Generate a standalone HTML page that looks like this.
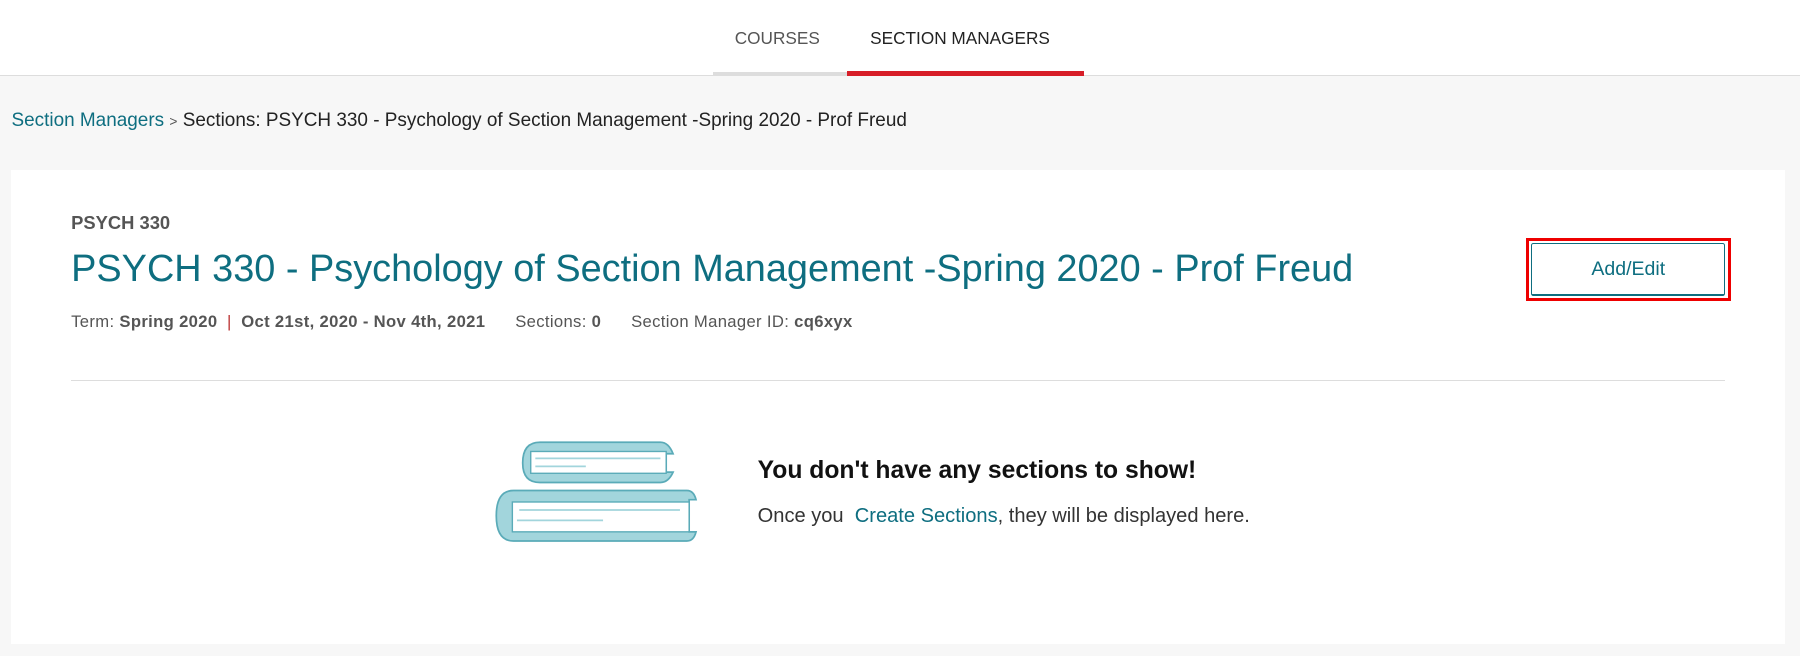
<!DOCTYPE html>
<html><head><meta charset="utf-8"><style>
html,body{margin:0;padding:0;}
body{width:1568px;height:571px;zoom:1.148;background:#f7f7f7;font-family:"Liberation Sans",sans-serif;position:relative;overflow:hidden;color:#333}
.hdr{position:absolute;left:0;top:0;width:1568px;height:65px;background:#fff;border-bottom:1px solid #ddd}
.tab{position:absolute;top:24px;font-size:15px;letter-spacing:0}
.card{position:absolute;left:10px;top:148px;width:1545px;height:413px;background:#fff}
</style></head><body>
<div class="hdr">
<div class="tab" style="left:640px;color:#555">COURSES</div>
<div class="tab" style="left:758px;color:#222">SECTION MANAGERS</div>
<div style="position:absolute;left:621px;top:63px;width:117px;height:2px;background:#ddd"></div>
<div style="position:absolute;left:738px;top:62px;width:206px;height:4px;background:#d71e28"></div>
</div>
<div style="position:absolute;left:10px;top:96px;font-size:16.5px;letter-spacing:0;white-space:nowrap"><span style="color:#0e6e80">Section Managers</span> <span style="font-size:12px;color:#555">&gt;</span> <span style="color:#222">Sections: PSYCH 330 - Psychology of Section Management -Spring 2020 - Prof Freud</span></div>
<div class="card">
<div style="position:absolute;left:52px;top:37px;font-size:16px;font-weight:bold;color:#555">PSYCH 330</div>
<div style="position:absolute;left:52px;top:68px;font-size:33px;color:#0e6e80;letter-spacing:0;white-space:nowrap">PSYCH 330 - Psychology of Section Management -Spring 2020 - Prof Freud</div>
<div style="position:absolute;left:52px;top:124px;font-size:14.5px;color:#555;white-space:nowrap;letter-spacing:0.3px">Term: <b>Spring 2020</b> <span style="color:#b33;margin:0 4px">|</span> <b>Oct 21st, 2020 - Nov 4th, 2021</b><span style="margin-left:26px">Sections: <b>0</b></span><span style="margin-left:26px">Section Manager ID: <b>cq6xyx</b></span></div>
<div style="position:absolute;left:1319px;top:59px;width:174px;height:50px;border:3px solid #e00"></div>
<div style="position:absolute;left:1324px;top:64px;width:167px;height:43px;border:1px solid #0e6e80;border-bottom-width:2px;border-radius:2px;color:#0e6e80;font-size:17px;text-align:center;line-height:44px">Add/Edit</div>
<div style="position:absolute;left:52px;top:183px;width:1441px;height:1px;background:#ddd"></div>
<svg style="position:absolute;left:420px;top:235px" width="180" height="90" viewBox="0 0 180 90">
<path d="M40 2 H145 Q152 2 156 12 H150 V28 H156 Q152 37 145 37 H40 Q25 37 25 20 Q25 2 40 2Z" fill="#a2d5dc" stroke="#5aabb8" stroke-width="1.5"/>
<rect x="32" y="10" width="118" height="19" fill="#fff" stroke="#5aabb8" stroke-width="1.2"/>
<line x1="36" y1="16" x2="145" y2="16" stroke="#a2d5dc" stroke-width="1.5"/><line x1="36" y1="23" x2="80" y2="23" stroke="#a2d5dc" stroke-width="1.5"/>
<path d="M17 44 H168 Q174 44 176 52 H170 V80 H176 Q174 88 168 88 H17 Q2 88 2 66 Q2 44 17 44Z" fill="#a2d5dc" stroke="#5aabb8" stroke-width="1.5"/>
<rect x="16" y="54" width="154" height="26" fill="#fff" stroke="#5aabb8" stroke-width="1.2"/>
<line x1="22" y1="61" x2="162" y2="61" stroke="#a2d5dc" stroke-width="1.5"/><line x1="20" y1="70" x2="95" y2="70" stroke="#a2d5dc" stroke-width="1.5"/>
</svg>
<div style="position:absolute;left:650px;top:250px;font-size:21.5px;font-weight:bold;color:#111;letter-spacing:0">You don't have any sections to show!</div>
<div style="position:absolute;left:650px;top:292px;font-size:17.5px;color:#333;letter-spacing:0;white-space:nowrap">Once you &nbsp;<span style="color:#0e6e80">Create Sections</span>, they will be displayed here.</div>
</div>
</body></html>
